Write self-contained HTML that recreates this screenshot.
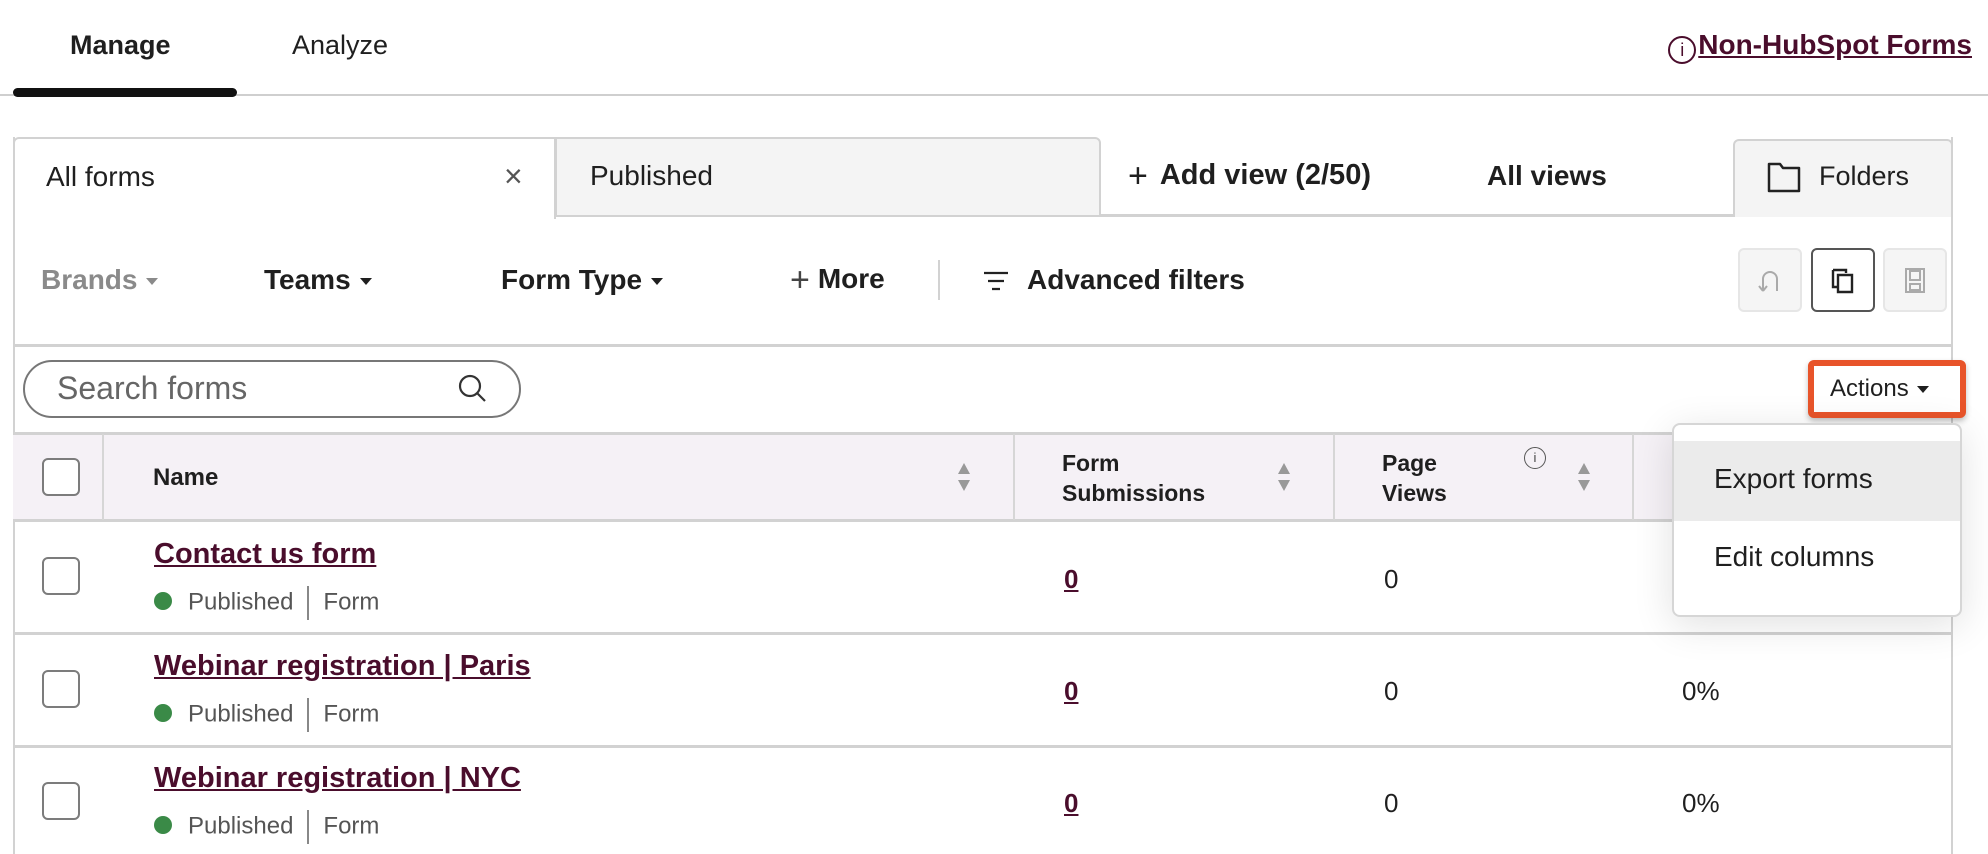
<!DOCTYPE html>
<html><head><meta charset="utf-8"><style>
*{box-sizing:border-box;margin:0;padding:0}
html,body{width:1988px;height:854px;overflow:hidden}
body{background:#fff;font-family:"Liberation Sans",sans-serif;color:#1f1f1f;position:relative}
.a{position:absolute;white-space:nowrap}
.b{font-weight:bold}
.caret{display:inline-block;width:0;height:0;border-left:6px solid transparent;border-right:6px solid transparent;border-top:7px solid #1f1f1f;vertical-align:middle;margin-left:9px}
.cb{position:absolute;width:38px;height:38px;border:2px solid #7c7c7c;border-radius:6px;background:#fff}
.link{color:#4a0d2c;text-decoration:underline;font-weight:bold}
.dot{display:inline-block;width:18px;height:18px;border-radius:50%;background:#3a8a47;vertical-align:-1px;margin-right:16px}
.sub{color:#555;font-size:24px}
.sep{display:inline-block;width:2px;height:34px;background:#888;vertical-align:middle;margin:0 14px}
.hline{position:absolute;height:3px;background:#d2d2d2}
.vline{position:absolute;width:2px;background:#d6d6d6}
.sort{position:absolute;width:14px;height:30px}
</style></head><body>
<!-- top tabs -->
<div class="a b" style="left:70px;top:30px;font-size:27px">Manage</div>
<div class="a" style="left:292px;top:30px;font-size:27px">Analyze</div>
<div class="a" style="left:0;top:94px;width:1988px;height:2px;background:#cfcfcf"></div>
<div class="a" style="left:13px;top:88px;width:224px;height:9px;border-radius:5px;background:#111"></div>
<div class="a" style="right:16px;top:29px;font-size:28px;color:#4a0d2c"><span style="display:inline-block;width:28px;height:28px;border:2px solid #4a0d2c;border-radius:50%;font-size:18px;text-align:center;line-height:24px;font-weight:normal;vertical-align:-2px;margin-right:2px">i</span><span class="link">Non-HubSpot Forms</span></div>

<!-- view tabs -->
<div class="a" style="left:13px;top:137px;width:1940px;height:717px;border-left:2px solid #d2d2d2;border-right:2px solid #d2d2d2"></div>
<div class="a" style="left:13px;top:137px;width:543px;height:82px;border:2px solid #d2d2d2;border-bottom:none;border-radius:6px 0 0 0;background:#fff"></div>
<div class="a" style="left:46px;top:161px;font-size:28px">All forms</div>
<div class="a" style="left:504px;top:158px;font-size:32px;color:#555;font-weight:100">×</div>
<div class="a" style="left:555px;top:137px;width:546px;height:80px;border:2px solid #d2d2d2;border-radius:0 6px 0 0;background:#f4f4f4"></div>
<div class="a" style="left:590px;top:160px;font-size:28px">Published</div>
<div class="hline" style="left:1099px;top:214px;width:636px"></div>
<div class="a b" style="left:1128px;top:157px;font-size:29px"><span style="font-weight:normal;font-size:34px;vertical-align:-3px;margin-right:12px">+</span>Add view (2/50)</div>
<div class="a b" style="left:1487px;top:160px;font-size:28px">All views</div>
<div class="a" style="left:1733px;top:139px;width:220px;height:78px;border:2px solid #d2d2d2;border-bottom:none;border-radius:6px 6px 0 0;background:#f4f4f4"></div>
<svg class="a" style="left:1766px;top:159px" width="36" height="36" viewBox="0 0 36 36"><path d="M3 5h11l3 4h16v23H3z" fill="none" stroke="#222" stroke-width="2.5" stroke-linejoin="round"/></svg>
<div class="a" style="left:1819px;top:161px;font-size:27px">Folders</div>

<!-- filters -->
<div class="a b" style="left:41px;top:264px;font-size:28px;color:#8a8a8a">Brands<span class="caret" style="border-top-color:#8a8a8a"></span></div>
<div class="a b" style="left:264px;top:264px;font-size:28px">Teams<span class="caret"></span></div>
<div class="a b" style="left:501px;top:264px;font-size:28px">Form Type<span class="caret"></span></div>
<div class="a b" style="left:790px;top:261px;font-size:28px"><span style="font-weight:normal;font-size:34px;color:#444;vertical-align:-3px;margin-right:8px">+</span>More</div>
<div class="a" style="left:938px;top:260px;width:2px;height:40px;background:#d2d2d2"></div>
<svg class="a" style="left:982px;top:270px" width="28" height="22"><path d="M2 3h24M6 11h16M10 19h8" stroke="#222" stroke-width="2.2"/></svg>
<div class="a b" style="left:1027px;top:264px;font-size:28px">Advanced filters</div>
<div class="a" style="left:1738px;top:248px;width:64px;height:64px;border:2px solid #e6e6e6;border-radius:6px;background:#f5f5f5"></div>
<svg class="a" style="left:1754px;top:264px" width="32" height="32"><path d="M9 27V15a7 7 0 0 1 14 0v12M9 27l-4-5M9 27l4-5" fill="none" stroke="#aaa" stroke-width="2"/></svg>
<div class="a" style="left:1811px;top:248px;width:64px;height:64px;border:2px solid #555;border-radius:6px;background:#fff"></div>
<svg class="a" style="left:1827px;top:264px" width="32" height="32"><path d="M6 6h13v3M11 11h14v17H11z M6 6v17h5" fill="none" stroke="#222" stroke-width="2.4"/></svg>
<div class="a" style="left:1883px;top:248px;width:64px;height:64px;border:2px solid #e6e6e6;border-radius:6px;background:#f5f5f5"></div>
<svg class="a" style="left:1899px;top:264px" width="32" height="32"><path d="M7 5h18v23H7zM11 7h10v9H11zM11 20h10v6H11z" fill="none" stroke="#aaa" stroke-width="2"/></svg>
<div class="hline" style="left:13px;top:344px;width:1940px"></div>

<!-- search -->
<div class="a" style="left:23px;top:360px;width:498px;height:58px;border:2px solid #777;border-radius:29px"></div>
<div class="a" style="left:57px;top:370px;font-size:32px;color:#666">Search forms</div>
<svg class="a" style="left:456px;top:372px" width="34" height="34"><circle cx="14" cy="14" r="10" fill="none" stroke="#333" stroke-width="2.2"/><path d="M21 21l8 8" stroke="#333" stroke-width="2.2"/></svg>
<div class="a" style="left:1808px;top:360px;width:158px;height:58px;border:6px solid #e8542a;border-radius:6px;background:#fff;box-shadow:0 3px 6px rgba(0,0,0,.25)"></div>
<div class="a" style="left:1830px;top:375px;font-size:24px">Actions<span class="caret" style="margin-left:8px"></span></div>

<!-- table header -->
<div class="a" style="left:13px;top:434px;width:1940px;height:86px;background:#f5f1f6"></div>
<div class="hline" style="left:13px;top:432px;width:1940px"></div>
<div class="hline" style="left:13px;top:519px;width:1940px"></div>
<div class="vline" style="left:102px;top:434px;height:86px"></div>
<div class="vline" style="left:1013px;top:434px;height:86px"></div>
<div class="vline" style="left:1333px;top:434px;height:86px"></div>
<div class="vline" style="left:1632px;top:434px;height:86px"></div>
<div class="cb" style="left:42px;top:458px"></div>
<div class="a b" style="left:153px;top:464px;font-size:24px">Name</div>
<div class="a b" style="left:1062px;top:448px;font-size:23px;line-height:30px">Form<br>Submissions</div>
<div class="a b" style="left:1382px;top:448px;font-size:23px;line-height:30px">Page<br>Views</div>
<div class="a" style="left:1524px;top:447px;width:22px;height:22px;border:1.5px solid #555;border-radius:50%;font-size:13px;text-align:center;line-height:19px;color:#444">i</div>
<svg class="sort" style="left:957px;top:462px"><path d="M7 1l6 11H1zM7 29l6-11H1z" fill="#999"/></svg>
<svg class="sort" style="left:1277px;top:462px"><path d="M7 1l6 11H1zM7 29l6-11H1z" fill="#999"/></svg>
<svg class="sort" style="left:1577px;top:462px"><path d="M7 1l6 11H1zM7 29l6-11H1z" fill="#999"/></svg>

<!-- rows -->
<div class="cb" style="left:42px;top:557px"></div>
<div class="a link" style="left:154px;top:538px;font-size:29px">Contact us form</div>
<div class="a sub" style="left:154px;top:586px"><span class="dot"></span>Published<span class="sep"></span>Form</div>
<div class="a link" style="left:1064px;top:564px;font-size:26px">0</div>
<div class="a" style="left:1384px;top:564px;font-size:26px">0</div>
<div class="hline" style="left:13px;top:632px;width:1940px"></div>

<div class="cb" style="left:42px;top:670px"></div>
<div class="a link" style="left:154px;top:650px;font-size:29px">Webinar registration | Paris</div>
<div class="a sub" style="left:154px;top:698px"><span class="dot"></span>Published<span class="sep"></span>Form</div>
<div class="a link" style="left:1064px;top:676px;font-size:26px">0</div>
<div class="a" style="left:1384px;top:676px;font-size:26px">0</div>
<div class="a" style="left:1682px;top:676px;font-size:26px">0%</div>
<div class="hline" style="left:13px;top:745px;width:1940px"></div>

<div class="cb" style="left:42px;top:782px"></div>
<div class="a link" style="left:154px;top:762px;font-size:29px">Webinar registration | NYC</div>
<div class="a sub" style="left:154px;top:810px"><span class="dot"></span>Published<span class="sep"></span>Form</div>
<div class="a link" style="left:1064px;top:788px;font-size:26px">0</div>
<div class="a" style="left:1384px;top:788px;font-size:26px">0</div>
<div class="a" style="left:1682px;top:788px;font-size:26px">0%</div>

<!-- dropdown -->
<div class="a" style="left:1672px;top:423px;width:290px;height:194px;border:2px solid #d6d6d6;border-radius:8px;background:#fff;box-shadow:0 8px 40px rgba(0,0,0,.12);overflow:hidden">
<div style="margin-top:16px;height:80px;background:#ebebeb;padding:22px 0 0 40px;font-size:28px">Export forms</div>
<div style="padding:20px 0 0 40px;font-size:28px">Edit columns</div>
</div>
</body></html>
